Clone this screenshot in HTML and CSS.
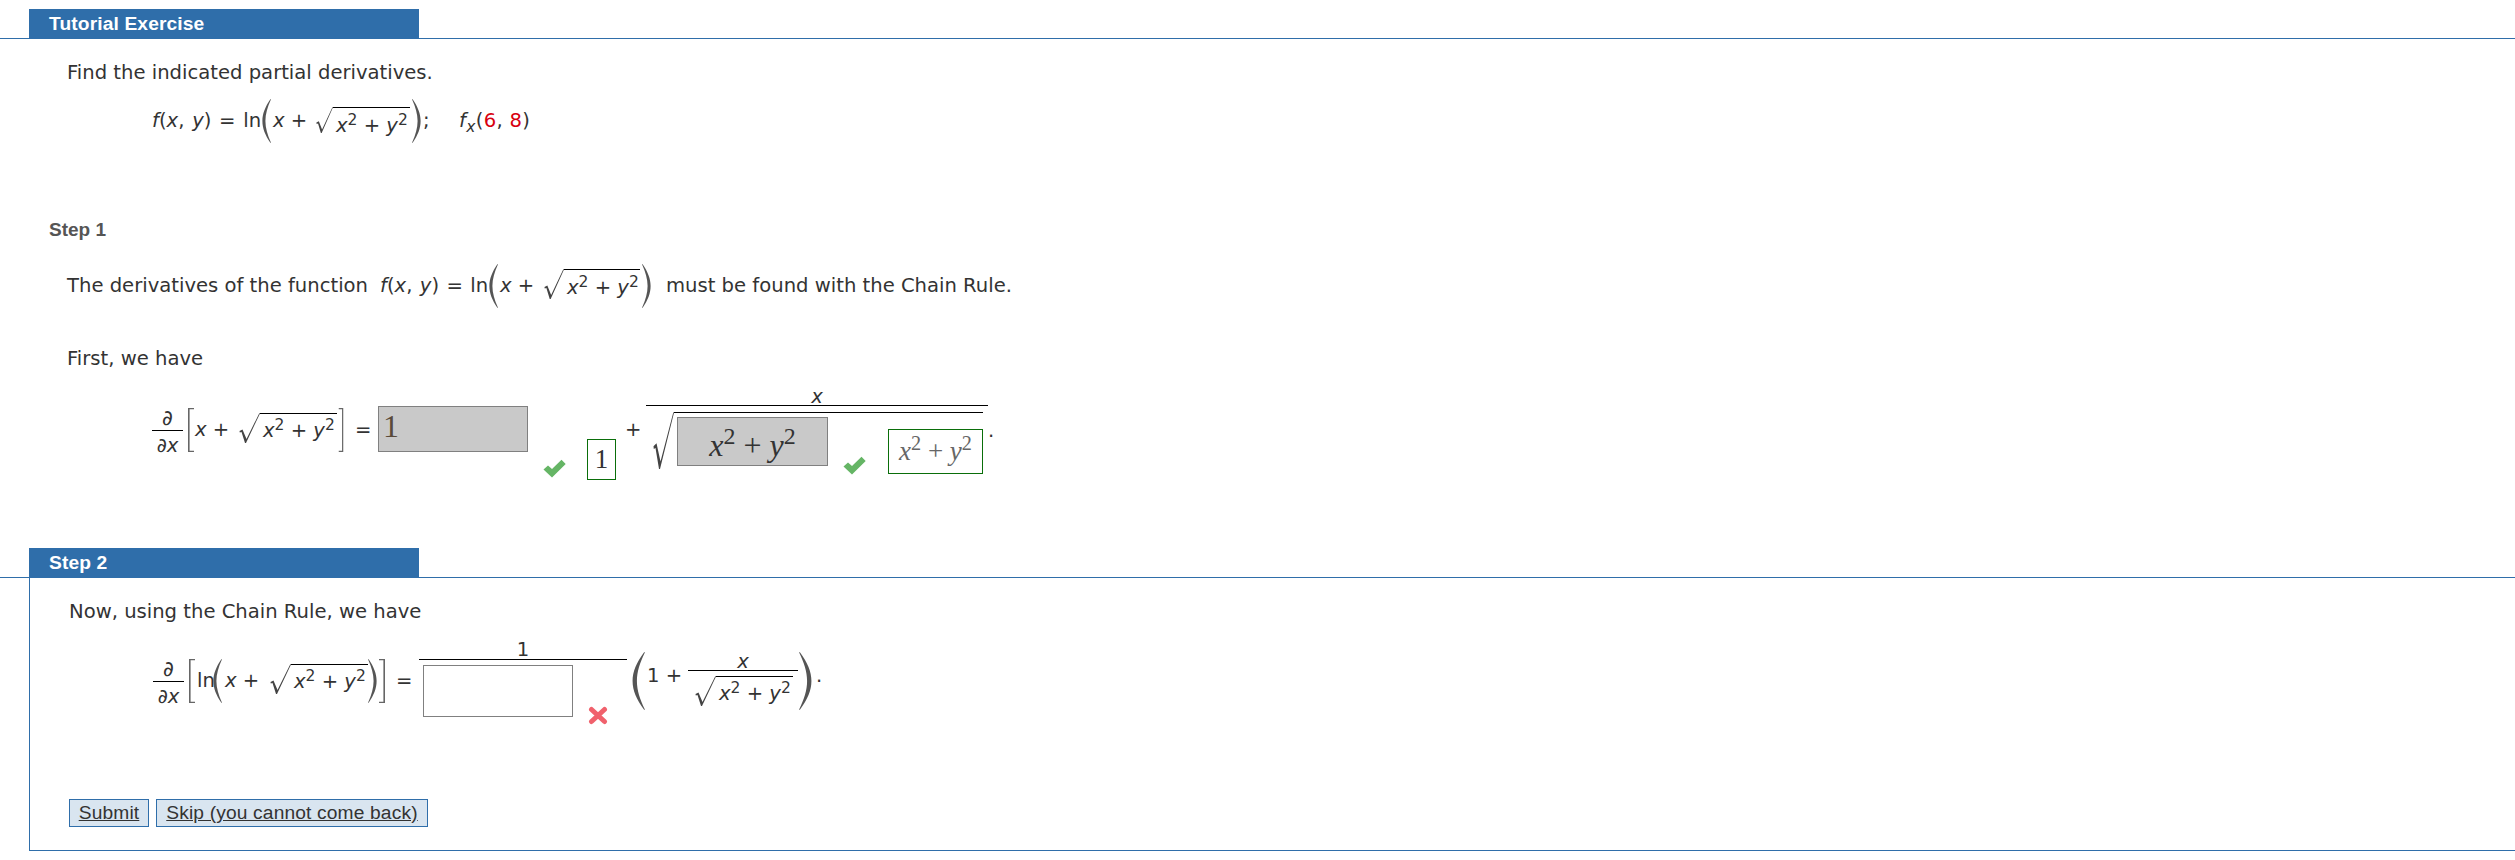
FILE: index.html
```html
<!DOCTYPE html>
<html lang="en">
<head>
<meta charset="utf-8">
<title>Tutorial Exercise</title>
<link rel="stylesheet" href="styles.css">
</head>
<body>
<svg class="defs" aria-hidden="true">
  <symbol id="paren" viewBox="0 0 9 44" preserveAspectRatio="none"><path d="M8.500 0 C3 8 .4 15 .4 22 C.4 29 3 36 8.500 44 L8.900 43.600 C5.500 36 3.400 29 3.400 22 C3.400 15 5.500 8 8.900 .4Z"/></symbol>
  <symbol id="bracket" viewBox="0 0 8 44" preserveAspectRatio="none"><path d="M1 0H7V1.200H2.600V42.800H7V44H1Z"/></symbol>
  <symbol id="root" viewBox="0 0 21 30" preserveAspectRatio="none"><path d="M.5 18 L3.500 16.500 L7.500 26 L20.400 0 L21 .4 L7 30 L6 30 L2.500 19 L.8 19.500Z"/></symbol>
  <symbol id="tick" viewBox="0 0 23 19"><path d="M.5 10.500 L5 6.500 L9 10 L18.500 .8 L22.700 5 L9 18.600Z"/></symbol>
</svg>

<section class="exercise">
  <header class="sec-head"><h2 class="bar">Tutorial Exercise</h2></header>
  <p class="txt txt-find">Find the indicated partial derivatives.</p>
  <div class="mline mline-1">
    <span class="t lead1"><i>f</i>(<i>x</i>, <i>y</i>) = ln</span>
    <svg class="paren"><use href="#paren"/></svg>
    <span class="t xp xp-1"><i>x</i> + </span>
    <div class="rad rad-1">
      <svg class="root root-1"><use href="#root"/></svg>
      <span class="radicand"><i>x</i><sup>2</sup> + <i>y</i><sup>2</sup></span>
    </div>
    <svg class="paren flip gap2"><use href="#paren"/></svg>
    <span class="t semi">;</span>
    <span class="t fx"><i>f</i><sub><i>x</i></sub>(<b class="red">6</b>, <b class="red">8</b>)</span>
  </div>

  <h3 class="step-label">Step 1</h3>
  <div class="mline mline-2">
    <span class="t lead2">The derivatives of the function</span>
    <span class="t lead3"><i>f</i>(<i>x</i>, <i>y</i>) = ln</span>
    <svg class="paren"><use href="#paren"/></svg>
    <span class="t xp xp-2"><i>x</i> + </span>
    <div class="rad rad-2">
      <svg class="root root-2"><use href="#root"/></svg>
      <span class="radicand r76"><i>x</i><sup>2</sup> + <i>y</i><sup>2</sup></span>
    </div>
    <svg class="paren flip gap2"><use href="#paren"/></svg>
    <span class="t tail">must be found with the Chain Rule.</span>
  </div>
  <p class="txt txt-first">First, we have</p>

  <div class="eq eq-3">
    <div class="eq-main">
      <div class="dfrac"><span class="dn">∂</span><span class="dd">∂<i>x</i></span></div>
      <svg class="bracket"><use href="#bracket"/></svg>
      <span class="t xp xp-3"><i>x</i> + </span>
      <div class="rad rad-3">
        <svg class="root"><use href="#root"/></svg>
        <span class="radicand"><i>x</i><sup>2</sup> + <i>y</i><sup>2</sup></span>
      </div>
      <svg class="bracket flip bracket-close"><use href="#bracket"/></svg>
      <span class="t eqs eqs-3">=</span>
    </div>
    <div class="box box-gray box-a"><span class="tex tex-one">1</span></div>
    <svg class="tick tick-a"><use href="#tick"/></svg>
    <div class="box box-ok box-b"><span class="tex tex-one2">1</span></div>
    <span class="t plus-b">+</span>
    <div class="bigfrac">
      <div class="num num-x"><i>x</i></div>
      <div class="den">
        <svg class="root root-big"><use href="#root"/></svg>
        <div class="rad-wide">
          <div class="box box-gray box-c"><span class="tex tex-big"><i>x</i><sup>2</sup> + <i>y</i><sup>2</sup></span></div>
          <svg class="tick tick-c"><use href="#tick"/></svg>
          <div class="box box-ok box-d"><span class="tex tex-small"><i>x</i><sup>2</sup> + <i>y</i><sup>2</sup></span></div>
        </div>
      </div>
    </div>
    <span class="t dot-3">.</span>
  </div>
</section>

<section class="step-two">
  <header class="sec-head"><h2 class="bar">Step 2</h2></header>
  <div class="step-body">
    <p class="txt txt-now">Now, using the Chain Rule, we have</p>
    <div class="eq eq-4">
      <div class="eq-main eq-main-4">
        <div class="dfrac"><span class="dn">∂</span><span class="dd">∂<i>x</i></span></div>
        <svg class="bracket"><use href="#bracket"/></svg>
        <span class="t ln4">ln</span>
        <svg class="paren"><use href="#paren"/></svg>
        <span class="t xp xp-4"><i>x</i> + </span>
        <div class="rad rad-3">
          <svg class="root"><use href="#root"/></svg>
          <span class="radicand"><i>x</i><sup>2</sup> + <i>y</i><sup>2</sup></span>
        </div>
        <svg class="paren flip"><use href="#paren"/></svg>
        <svg class="bracket flip"><use href="#bracket"/></svg>
        <span class="t eqs eqs-4">=</span>
      </div>
      <div class="frac-ans">
        <div class="num num-1">1</div>
        <div class="ans-row">
          <input class="box box-empty" type="text" aria-label="Answer">
          <svg class="cross" viewBox="0 0 20 19"><path d="M3.500 3.500L16.500 15.500M16.500 3.500L3.500 15.500"/></svg>
        </div>
      </div>
      <svg class="paren paren-big"><use href="#paren"/></svg>
      <span class="t one4">1 +</span>
      <div class="frac-x">
        <div class="num num-x2"><i>x</i></div>
        <div class="rad rad-4">
          <svg class="root"><use href="#root"/></svg>
          <span class="radicand"><i>x</i><sup>2</sup> + <i>y</i><sup>2</sup></span>
        </div>
      </div>
      <svg class="paren paren-big paren-close flip"><use href="#paren"/></svg>
      <span class="t dot-4">.</span>
    </div>
    <div class="actions">
      <button class="btn btn-submit" type="button">Submit</button>
      <button class="btn btn-skip" type="button">Skip (you cannot come back)</button>
    </div>
  </div>
</section>
</body>
</html>
```
FILE: styles.css
```css
* { box-sizing: border-box; }
html, body { margin: 0; padding: 0; background: #fff; }
body {
  width: 2515px;
  height: 860px;
  overflow: hidden;
  padding-top: 9px;
  color: #333;
  font-family: "DejaVu Sans", "Noto Sans", sans-serif;
  font-size: 19.6px;
}
.defs { position: absolute; width: 0; height: 0; }
i { font-style: italic; }
b.red { font-weight: normal; color: #d8000f; }

.sec-head { height: 30px; border-bottom: 1px solid #2f6eaa; display: flex; }
.bar {
  width: 390px;
  height: 30px;
  margin: 0 0 -1px 29px;
  padding-left: 20px;
  background: #2f6eaa;
  color: #fff;
  font: bold 19.2px/29px "Liberation Sans", Arial, sans-serif;
  letter-spacing: .13px;
}
.txt { margin: 0; line-height: 24px; white-space: nowrap; }
.txt-find { margin: 22px 0 0 67px; }
.txt-first { margin: 39px 0 0 67px; }
.txt-now { margin: 22px 0 0 39px; }

.step-label {
  margin: 75px 0 0 49px;
  color: #555;
  font: bold 19px/24px "Liberation Sans", Arial, sans-serif;
}

.mline { display: flex; align-items: flex-start; height: 44px; white-space: nowrap; }
.mline-1 { margin: 14px 0 0 152px; }
.mline-2 { margin: 22px 0 0 67px; }
.t { display: block; line-height: 44px; white-space: pre; flex: none; }
.lead1 { width: 110px; word-spacing: 1.500px; }
.lead2 { width: 313px; }
.lead3 { width: 109px; word-spacing: 1.200px; }
.xp { width: 43px; margin-left: 2px; }
.xp-2 { width: 44px; }
.xp-3 { margin-left: 0; width: 44px; }
.xp-4 { margin-left: 3px; width: 45px; }
.gap2 { margin-left: 2px; }
.semi { margin-left: 2px; width: 36px; }
.fx { letter-spacing: .3px; }
.tail { margin-left: 15px; }
sub { font-size: 15.500px; line-height: 0; vertical-align: -5px; }
sup { font-size: 15.500px; line-height: 0; vertical-align: 7px; }

.paren { display: block; flex: none; width: 9px; height: 44px; fill: #555; }
.flip { transform: scaleX(-1); }
.bracket { display: block; flex: none; width: 8px; height: 44px; fill: #666; margin-left: 1px; }
.bracket-close { width: 6px; }

.rad { display: flex; flex: none; align-items: flex-start; margin-top: 5px; }
.rad-1 { margin-top: 8px; }
.root { display: block; flex: none; width: 21px; height: 30px; fill: #444; }
.root-1 { width: 17px; height: 26px; }
.root-2 { width: 20px; height: 30px; }
.radicand {
  display: block;
  flex: none;
  width: 77px;
  height: 30px;
  border-top: 1px solid #000;
  padding: 5px 0 0 3px;
  line-height: 24px;
  white-space: pre;
}
.rad-1 .radicand, .rad-2 .radicand { padding-top: 6px; }
.r76 { width: 76px; }

.eq { display: flex; align-items: flex-start; white-space: nowrap; }
.eq-3 { margin: 17px 0 0 152px; height: 92px; }
.eq-main { display: flex; align-items: flex-start; margin-top: 20px; flex: none; }
.dfrac {
  width: 31px;
  margin: -2px 3px 0 0;
  display: flex;
  flex-direction: column;
  align-items: center;
  flex: none;
}
.dn { display: block; width: 100%; height: 25px; border-bottom: 1px solid #000; font-size: 21px; line-height: 24px; text-align: center; }
.dd { display: block; height: 30px; line-height: 30px; }
.eqs-3 { margin-left: 11px; width: 23px; }

.box { display: block; flex: none; border: 1px solid #808080; }
.box-gray { background: #c9c9c9; }
.box-ok { border-color: #0a6e0a; background: #fff; }
.tex { display: block; font-family: "Liberation Serif", "Times New Roman", serif; white-space: pre; }
.tex sup { font-size: .75em; vertical-align: .5em; }
.box-a { width: 150px; height: 46px; margin-top: 18px; padding-left: 4px; }
.tex-one { font-size: 32px; line-height: 32px; color: #5a4a3a; margin-top: 3px; }
.tick { display: block; flex: none; fill: #65b565; width: 23px; height: 19px; }
.tick-a { margin: 71px 0 0 15px; }
.box-b { width: 29px; height: 41px; margin: 51px 0 0 21px; text-align: center; }
.tex-one2 { font-size: 27px; line-height: 38px; color: #333; }
.plus-b { margin: 20px 0 0 9px; width: 21px; }
.bigfrac { width: 342px; flex: none; }
.num { text-align: center; }
.num-x { height: 18px; line-height: 18px; border-bottom: 1px solid #000; }
.den { display: flex; align-items: flex-start; margin-top: 6px; margin-left: 7px; }
.root-big { width: 21px; height: 57px; }
.rad-wide { width: 309px; height: 62px; border-top: 1px solid #000; display: flex; align-items: flex-start; padding-left: 3px; }
.box-c { width: 151px; height: 49px; margin-top: 4px; text-align: center; }
.tex-big { font-size: 32px; line-height: 54px; color: #333; }
.tick-c { margin: 43px 0 0 15px; }
.box-d { width: 95px; height: 45px; margin: 16px 0 0 22px; text-align: center; }
.tex-small { font-size: 27px; line-height: 42px; color: #666; }
.dot-3 { margin: 34px 0 0 0; line-height: 18px; }

.step-two { margin-top: 68px; }
.step-body { margin-left: 29px; height: 273px; border-left: 1px solid #2f6eaa; border-bottom: 1px solid #2f6eaa; display: flow-root; }
.eq-4 { margin: 16px 0 0 123px; height: 87px; }
.eq-main-4 { margin-top: 19px; }
.ln4 { width: 16px; margin-left: 1px; }
.eqs-4 { margin-left: 10px; width: 23px; }
.frac-ans { width: 208px; flex: none; }
.num-1 { height: 20px; line-height: 19px; border-bottom: 1px solid #000; }
.ans-row { display: flex; align-items: flex-start; margin: 5px 0 0 4px; }
.box-empty { width: 150px; height: 52px; padding: 0; background: #fff; outline: none; }
.cross { display: block; flex: none; width: 20px; height: 19px; margin: 41px 0 0 15px; fill: none; stroke: #f0616c; stroke-width: 5px; stroke-linecap: round; }
.paren-big { width: 13px; height: 58px; margin: 12px 0 0 5px; }
.paren-close { margin-left: 1px; }
.one4 { margin: 14px 0 0 2px; width: 41px; }
.frac-x { width: 110px; flex: none; margin-top: 13px; }
.num-x2 { height: 18px; line-height: 18px; border-bottom: 1px solid #000; }
.rad-4 { margin: 5px 0 0 7px; }
.dot-4 { margin: 14px 0 0 4px; }

.actions { display: flex; gap: 7px; margin-top: 72px; margin-left: 39px; }
.btn {
  height: 28px;
  padding: 0;
  border: 1px solid #2f6eaa;
  background: #d9e5f0;
  color: #333;
  font: 19.2px/26px "Liberation Sans", Arial, sans-serif;
  letter-spacing: .15px;
  text-decoration: underline;
  white-space: pre;
}
.btn-submit { width: 80px; }
.btn-skip { width: 272px; }
```
